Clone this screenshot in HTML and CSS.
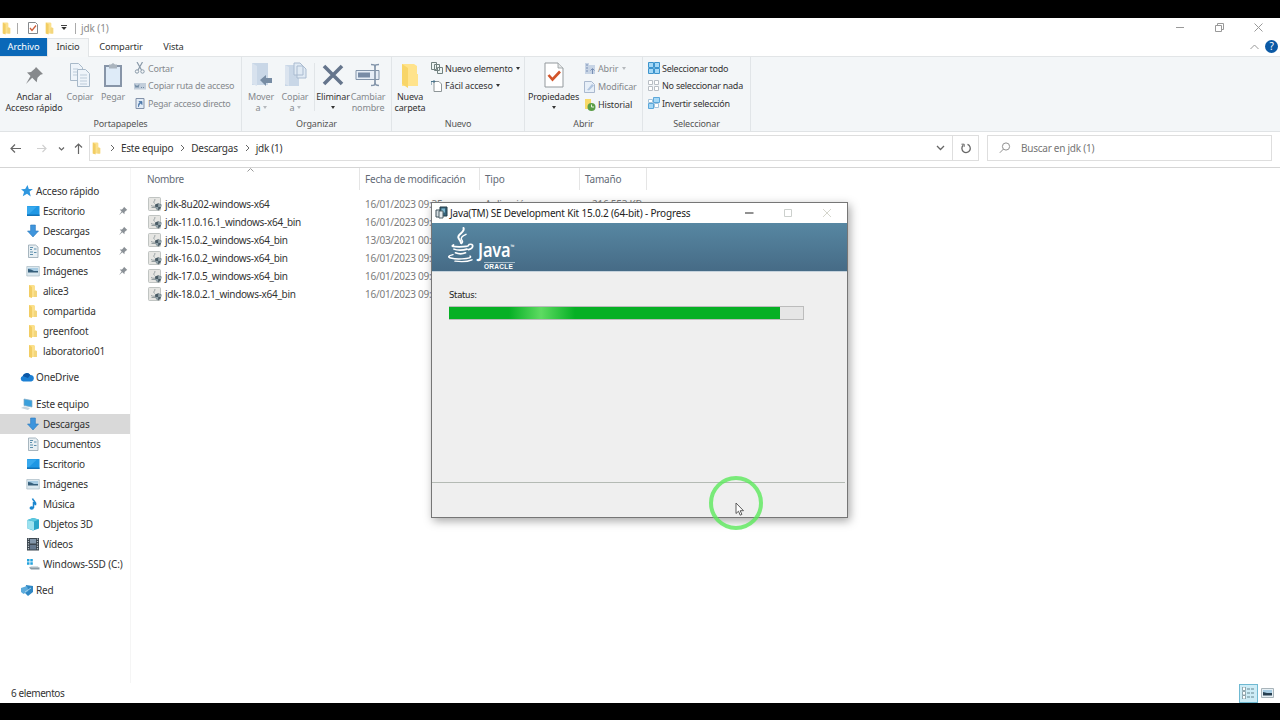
FILE: index.html
```html
<!DOCTYPE html>
<html lang="es">
<head>
<meta charset="utf-8">
<title>jdk (1)</title>
<link rel="stylesheet" href="styles.css">
</head>
<body>
<svg class="defs" width="0" height="0">
  <symbol id="folder" viewBox="0 0 14 14"><path d="M3 1h5l1 1v4l2 1v6H3z" fill="#fbe08c"/><path d="M3 1l3 2v11l-3-1z" fill="#f2cd63"/><path d="M8 7h3v6H8z" fill="#f3d67d"/></symbol>
  <symbol id="pin" viewBox="0 0 10 10"><path d="M6 .7L9.3 4 8.2 4.4 6.6 6 6.4 8.2 4.3 6.2 1 9.2 3.6 5.5 1.7 3.6 4 3.4 5.6 1.8z" fill="#8a9096"/></symbol>
  <symbol id="down" viewBox="0 0 14 14"><path d="M4.6 1h4.8v6H12.500L7 13 1.500 7h3.100z" fill="#3f95dc" stroke="#2a79be" stroke-width=".6"/></symbol>
  <symbol id="desk" viewBox="0 0 14 14"><rect x="1" y="2" width="12.500" height="10" rx=".5" fill="#1f97e4"/><path d="M1 10.500h12.500V12H1z" fill="#1272b8"/><path d="M1 2.500h10L3 10H1z" fill="#37a9ee"/></symbol>
  <symbol id="doc" viewBox="0 0 14 14"><path d="M2.500 1h7l2.500 2v10.500H2.500z" fill="#e8eff3" stroke="#93a5b0" stroke-width=".8"/><path d="M4 3.500h3M4 5.500h2M8 5h2.500M4 8h3M4 10.500h3M8 8.500h2.500" stroke="#5f90ad"/></symbol>
  <symbol id="pic" viewBox="0 0 14 14"><path d="M.8 2.500h12.500v9.500H.8z" fill="#dbe8ef" stroke="#a9bac4" stroke-width=".7"/><path d="M2 4h10v3H2z" fill="#a8cce3"/><path d="M2 5l3 .5 3 1.500h4v1.500H2z" fill="#365f7b"/></symbol>
  <symbol id="star" viewBox="0 0 14 14"><path d="M7.500 1l1.300 4H13L9.600 7.500l1.100 5L7 9.700 2.800 12.200l1.300-4.400L1 5.300l4.200-.2z" fill="#2f97df"/></symbol>
  <symbol id="cloud" viewBox="0 0 14 14"><path d="M3.200 11.500a2.900 2.900 0 0 1-.5-5.600A4.300 4.300 0 0 1 10.300 5 3.300 3.300 0 0 1 11.300 11.500z" fill="#1c80d4"/><path d="M2.700 5.900A4.300 4.300 0 0 1 10.300 5L8 8z" fill="#0c57a6"/></symbol>
  <symbol id="pc" viewBox="0 0 14 14"><path d="M4 2l8 1.500V10L4 8.500z" fill="#3aa0dc" stroke="#7fabc6" stroke-width=".7"/><path d="M1 11l3-1.500 6 1.500-2 2z" fill="#c6d4dd"/></symbol>
  <symbol id="music" viewBox="0 0 14 14"><path d="M6.500 1.500c.5 2.500 4 3 3 6.500-.3-1.500-1-2-2-2.300V11" fill="none" stroke="#1a86cf" stroke-width="1.500"/><ellipse cx="5.700" cy="11" rx="2.200" ry="1.700" fill="#1a86cf"/></symbol>
  <symbol id="cube" viewBox="0 0 14 14"><path d="M1.500 3L7 1l6 1.500v9L7 13.500l-5.500-2z" fill="#27a5c9"/><path d="M1.500 3L8 4.500v9l-6.500-2z" fill="#9be2ef"/><path d="M1.500 3L7 1l6 1.500-5 2z" fill="#5cc8df"/></symbol>
  <symbol id="film" viewBox="0 0 14 14"><path d="M1 1h12v12.500H1z" fill="#3c464f"/><path d="M4 2h6v4.500H4z" fill="#8498ac"/><path d="M4 8h6v4.500H4z" fill="#66798f"/><path d="M2.500 1.500v12M11.500 1.500v12" stroke="#b9c2c8" stroke-width="1.200" stroke-dasharray="1.200 1.200"/></symbol>
  <symbol id="drive" viewBox="0 0 14 14"><path d="M1 2h2.500v2.500H1zM4.300 2h2.500v2.500H4.300zM1 5.300h2.500v2.500H1zM4.300 5.300h2.500v2.500H4.300z" fill="#24a3dd"/><path d="M3 10.500l3-1h5l2.500 1v2H5z" fill="#8b9aa3"/><path d="M3 10l3-1h5l2.500 1.500H6z" fill="#d4dde1"/></symbol>
  <symbol id="net" viewBox="0 0 14 14"><path d="M6 2l7 1v6l-5 4-3-3z" fill="#2f87c4"/><path d="M1 5l6-2 1.500 5-5 3L1 9z" fill="#5cabdc"/><path d="M5 9l6-4" stroke="#b8dcf0" stroke-width=".8"/></symbol>
  <symbol id="jar" viewBox="0 0 14 14"><rect x=".5" y=".5" width="12" height="13" rx="1" fill="#e6e6e3" stroke="#b3b7b6" stroke-width=".8"/><path d="M6.500 2c1.500 1.500-2 2.500 0 4.500M3 8.500c2 1 4 1 5.500 0M3.500 10.500h4" fill="none" stroke="#8b9598" stroke-width=".9"/><path d="M7 7.500l3.200-1.200L13.400 7.500c0 3-1 4.800-3.200 6-2.200-1.200-3.200-3-3.200-6z" fill="#4a5c66"/><path d="M10.200 6.500v3.500H13c.3-1 .4-1.700.3-2.300zM10.200 10v3.300C8.800 12.500 8 11.500 7.400 10z" fill="#93a3aa"/></symbol>
  <symbol id="check" viewBox="0 0 20 26"><path d="M1 1h13l5 5v19H1z" fill="#fff" stroke="#93999d"/><path d="M14 1v5h5" fill="#e5e7e8" stroke="#93999d" stroke-width=".8"/><path d="M4.500 13l4 4.500L16 9.500" fill="none" stroke="#d2542a" stroke-width="2.600"/></symbol>
</svg>

<div class="screen">
  <header class="titlebar">
    <svg class="tb-folder" width="13" height="14"><use href="#folder"/></svg>
    <i class="tick"></i>
    <svg class="tb-check" width="10" height="12" viewBox="0 0 10 12"><path d="M.5.5h7l2 2v9h-9z" fill="#fff" stroke="#85898c"/><path d="M2 6l2 2.500 4-5" fill="none" stroke="#cd5d38" stroke-width="1.300"/></svg>
    <svg class="tb-folder2" width="13" height="14"><use href="#folder"/></svg>
    <svg class="tb-drop" width="6" height="6" viewBox="0 0 6 6"><path d="M0 .5h6" stroke="#444"/><path d="M.3 2h5.400L3 5z" fill="#333"/></svg>
    <i class="tick"></i>
    <span class="tb-title">jdk (1)</span>
    <svg class="winbtns" width="92" height="12" viewBox="0 0 92 12" fill="none" stroke="#999"><path d="M2 5.500h8"/><path d="M41.500 3.500h6v6h-6zM43.500 3.500v-2h6v6h-2"/><path d="M80.500 1.500l8 8M88.500 1.500l-8 8"/></svg>
  </header>
  <nav class="tabs">
    <span class="tab file">Archivo</span><span class="tab active">Inicio</span><span class="tab t3">Compartir</span><span class="tab t4">Vista</span>
    <svg class="collapse" width="9" height="6" viewBox="0 0 9 6"><path d="M.5 5l4-4 4 4" fill="none" stroke="#999"/></svg>
    <span class="help">?</span>
  </nav>

  <section class="ribbon">
    <div class="group g1">
      <div class="tools">
        <div class="big w62"><svg width="20" height="26" viewBox="0 0 20 26"><path d="M12 5l7 7-2.500.7-3 3-.8 4.600-4.500-4.500L2 22l4.500-8L3 10.500l4-.5 4-3.500z" fill="#86898c"/></svg><span>Anclar al<br>Acceso rápido</span></div>
        <div class="big w30 dim"><svg width="22" height="26" viewBox="0 0 22 26"><g fill="#eef4fa" stroke="#a8b9c9"><path d="M1.500 1.500h8l4 4v13h-12z"/><path d="M8.500 7.500h8l4 4v13h-12z"/></g><path d="M4 7h5M4 10h4M4 13h4M11 13h7M11 16h7M11 19h7M11 22h7" stroke="#bccbd9"/></svg><span>Copiar</span></div>
        <div class="big w36 dim"><svg width="20" height="26" viewBox="0 0 20 26"><path d="M2 4h16v20H2z" fill="#deebf8" stroke="#8795a8" stroke-width="2"/><path d="M6 2.500h2L10 1l2 1.500h2v4H6z" fill="#aab4be"/></svg><span>Pegar</span></div>
        <div class="small dim s1">
          <div><svg width="12" height="12" viewBox="0 0 12 12" fill="none" stroke="#8999a8"><path d="M3 0l4.500 8M8.500 0L4 8" stroke-width="1.200"/><circle cx="3" cy="9.500" r="1.700"/><circle cx="8.500" cy="9.500" r="1.700"/></svg><span>Cortar</span></div>
          <div><svg width="12" height="12" viewBox="0 0 12 12"><path d="M0 3h12v6.500H0z" fill="#c2cedb"/><path d="M1 4.500l1 3 1-2 1 2 1-3M7 7.500h1M9 7.500h1" fill="none" stroke="#69839e" stroke-width=".9"/></svg><span>Copiar ruta de acceso</span></div>
          <div><svg width="12" height="12" viewBox="0 0 12 12"><path d="M2 1.500h8v10H2z" fill="#e1ebf6" stroke="#8291a8"/><path d="M4.500 10V8c0-2 1-2 2-2M5 4.500h3v3z" stroke="#4e79aa" fill="#4e79aa" stroke-width=".8"/></svg><span>Pegar acceso directo</span></div>
        </div>
      </div>
      <div class="caption">Portapapeles</div>
    </div>
    <div class="group g2">
      <div class="tools">
        <div class="big w34 dim"><svg width="24" height="26" viewBox="0 0 24 26"><path d="M3 1h16v22H3z" fill="#c9d7e7"/><path d="M3 1l5 3v20l-5-2z" fill="#d8e2ee"/><path d="M11 18l6-5v3h6v5h-6v3z" fill="#778ca4"/></svg><span>Mover<br>a <b class="dd"></b></span></div>
        <div class="big w34 dim"><svg width="24" height="26" viewBox="0 0 24 26"><path d="M2 3h14v21H2z" fill="#c9d7e7"/><path d="M2 3l4 2v19l-4-2z" fill="#dbe4ef"/><path d="M11 1h6l3 3v9h-9zM14 4h6l3 3v9h-9z" fill="#e0eaf4" stroke="#aabbd0"/></svg><span>Copiar<br>a <b class="dd"></b></span></div>
        <i class="vsep"></i>
        <div class="big w36"><svg width="22" height="26" viewBox="0 0 22 26"><path d="M2 4l18 18M20 4L2 22" stroke="#65758c" stroke-width="3.600"/></svg><span>Eliminar<br><b class="dd"></b></span></div>
        <div class="big w34 dim"><svg width="26" height="26" viewBox="0 0 26 26" fill="none" stroke="#8395aa"><path d="M1 8.500h23v9H1z" fill="#e6eef7"/><path d="M3 10.500h12v5H3z" fill="#788ca6" stroke="none"/><path d="M16 2.500c3 0 4 0 4 3v15c0 3-1 3-4 3M24 2.500c-3 0-4 0-4 3M20 20c0 3 1 3.500 4 3.500" stroke-width="1.700"/></svg><span>Cambiar<br>nombre</span></div>
      </div>
      <div class="caption">Organizar</div>
    </div>
    <div class="group g3">
      <div class="tools">
        <div class="big w36"><svg width="20" height="26" viewBox="0 0 20 26"><path d="M2 2h12l3 2v8h1v12H2z" fill="#ffe38c"/><path d="M2 2l6 4v20l-6-4z" fill="#f8d568"/></svg><span>Nueva<br>carpeta</span></div>
        <div class="small s3">
          <div><svg width="12" height="12" viewBox="0 0 12 12" fill="#edf4f3" stroke="#71807f"><path d="M.5.500h5v7h-5zM3.500 2.500h5v6h-5zM6.500 5.500h5v6h-5z"/></svg><span>Nuevo elemento</span><b class="dd"></b></div>
          <div><svg width="12" height="12" viewBox="0 0 12 12"><path d="M3 1.500h5l2.500 2.500v7.500H3z" fill="#fff" stroke="#8e9698"/><path d="M0 5V1.500h4M2.500 0L4 1.500 2.500 3" fill="none" stroke="#4d768d"/></svg><span>Fácil acceso</span><b class="dd"></b></div>
        </div>
      </div>
      <div class="caption">Nuevo</div>
    </div>
    <div class="group g4">
      <div class="tools">
        <div class="big w54"><svg width="20" height="26"><use href="#check"/></svg><span>Propiedades<br><b class="dd"></b></span></div>
        <div class="small s4">
          <div class="dim"><svg width="12" height="12" viewBox="0 0 12 12"><path d="M1 0h4v11H1zM5 2h6v9H5z" fill="#c7d4e5"/><path d="M2 2h2M2 5h2M2 8h2M8.500 11V6M6.500 7.500l2-2 2 2" fill="none" stroke="#788fb5"/></svg><span>Abrir</span><b class="dd"></b></div>
          <div class="dim"><svg width="12" height="12" viewBox="0 0 12 12"><path d="M.5.500h7l3 3v8H.500z" fill="#e7eff8" stroke="#aab9ce"/><path d="M3 9l5-6 2 1.500-5 5z" fill="#b1c5df"/></svg><span>Modificar</span></div>
          <div><svg width="12" height="12" viewBox="0 0 12 12"><path d="M1 0h6v11l-3-1H1z" fill="#f8d967"/><circle cx="7.500" cy="8" r="4" fill="#5b9e48"/><path d="M7.500 5.500V8H10" fill="none" stroke="#e8f4da"/></svg><span>Historial</span></div>
        </div>
      </div>
      <div class="caption">Abrir</div>
    </div>
    <div class="group g5">
      <div class="tools">
        <div class="small s5">
          <div><svg width="12" height="12" viewBox="0 0 12 12" fill="#a5d8f6" stroke="#3c94cd"><path d="M.5.500h5v5h-5zM6.500.500h5v5h-5zM.5 6.500h5v5h-5zM6.500 6.500h5v5h-5z"/></svg><span>Seleccionar todo</span></div>
          <div><svg width="12" height="12" viewBox="0 0 12 12" fill="#fff" stroke="#b8bec4"><path d="M.5.500h4v4h-4zM6.500.500h4v4h-4zM.5 6.500h4v4h-4zM6.500 6.500h4v4h-4z"/></svg><span>No seleccionar nada</span></div>
          <div><svg width="12" height="12" viewBox="0 0 12 12"><path d="M.5 2.500h4v3h-4zM6.500 6.500h4v4h-4z" fill="#fff" stroke="#a4c3da"/><path d="M5.500.500h6v5h-6zM.5 6.500h5v5h-5z" fill="#a5d8f6" stroke="#5ca7d9"/></svg><span>Invertir selección</span></div>
        </div>
      </div>
      <div class="caption">Seleccionar</div>
    </div>
  </section>

  <section class="address">
    <svg class="navs" width="89" height="14" viewBox="0 0 89 14" fill="none" stroke="#666" stroke-width="1.200"><path d="M11 7.500h10M15 3.500l-4 4 4 4"/><path d="M37 7.500h9M42.500 4l3.500 3.500-3.500 3.500" stroke="#d0d0d0"/><path d="M59 6.500l2.500 2.500 2.500-2.500"/><path d="M78.500 13V3M75 6.500L78.500 3 82 6.500"/></svg>
    <div class="path">
      <svg width="13" height="14"><use href="#folder"/></svg>
      <svg class="chev" width="5" height="8" viewBox="0 0 5 8"><path d="M1 1l3 3-3 3" fill="none" stroke="#666"/></svg><span class="c1">Este equipo</span>
      <svg class="chev" width="5" height="8" viewBox="0 0 5 8"><path d="M1 1l3 3-3 3" fill="none" stroke="#666"/></svg><span class="c2">Descargas</span>
      <svg class="chev" width="5" height="8" viewBox="0 0 5 8"><path d="M1 1l3 3-3 3" fill="none" stroke="#666"/></svg><span class="c3">jdk (1)</span>
      <svg class="pdrop" width="9" height="6" viewBox="0 0 9 6"><path d="M1 1l3.500 3.500L8 1" fill="none" stroke="#666" stroke-width="1.300"/></svg>
    </div>
    <div class="refresh"><svg width="12" height="12" viewBox="0 0 12 12" fill="none" stroke="#666" stroke-width="1.300"><path d="M7.500 2.400A4.200 4.200 0 1 1 3.200 3.300"/><path d="M1.500 2.200h2.700v2.600" stroke-width="1"/></svg></div>
    <div class="search"><svg width="12" height="12" viewBox="0 0 12 12" fill="none" stroke="#909090"><circle cx="7" cy="4.500" r="3.600"/><path d="M4.500 7L.8 10.800"/></svg><span>Buscar en jdk (1)</span></div>
  </section>

  <main class="content">
    <aside class="side">
      <div class="row top"><svg><use href="#star"/></svg><span>Acceso rápido</span></div>
      <div class="row"><svg><use href="#desk"/></svg><span>Escritorio</span><svg class="pin"><use href="#pin"/></svg></div>
      <div class="row"><svg><use href="#down"/></svg><span>Descargas</span><svg class="pin"><use href="#pin"/></svg></div>
      <div class="row"><svg><use href="#doc"/></svg><span>Documentos</span><svg class="pin"><use href="#pin"/></svg></div>
      <div class="row"><svg><use href="#pic"/></svg><span>Imágenes</span><svg class="pin"><use href="#pin"/></svg></div>
      <div class="row"><svg><use href="#folder"/></svg><span>alice3</span></div>
      <div class="row wide"><svg><use href="#folder"/></svg><span>compartida</span></div>
      <div class="row wide"><svg><use href="#folder"/></svg><span>greenfoot</span></div>
      <div class="row wide"><svg><use href="#folder"/></svg><span>laboratorio01</span></div>
      <div class="row top gap"><svg><use href="#cloud"/></svg><span>OneDrive</span></div>
      <div class="row top gap"><svg><use href="#pc"/></svg><span>Este equipo</span></div>
      <div class="row sel"><svg><use href="#down"/></svg><span>Descargas</span></div>
      <div class="row"><svg><use href="#doc"/></svg><span>Documentos</span></div>
      <div class="row"><svg><use href="#desk"/></svg><span>Escritorio</span></div>
      <div class="row"><svg><use href="#pic"/></svg><span>Imágenes</span></div>
      <div class="row"><svg><use href="#music"/></svg><span>Música</span></div>
      <div class="row"><svg><use href="#cube"/></svg><span>Objetos 3D</span></div>
      <div class="row"><svg><use href="#film"/></svg><span>Vídeos</span></div>
      <div class="row wide"><svg><use href="#drive"/></svg><span>Windows-SSD (C:)</span></div>
      <div class="row top gap"><svg><use href="#net"/></svg><span>Red</span></div>
    </aside>
    <section class="files">
      <div class="head"><span class="h1">Nombre<svg class="sort" width="7" height="4" viewBox="0 0 7 4"><path d="M.5 3.500l3-3 3 3" fill="none" stroke="#999"/></svg></span><span class="h2">Fecha de modificación</span><span class="h3">Tipo</span><span class="h4">Tamaño</span></div>
      <div class="file-row"><svg><use href="#jar"/></svg><span class="name">jdk-8u202-windows-x64</span><span class="date">16/01/2023 09:35</span><span class="type">Aplicación</span><span class="size">216.553 KB</span></div>
      <div class="file-row"><svg><use href="#jar"/></svg><span class="name">jdk-11.0.16.1_windows-x64_bin</span><span class="date">16/01/2023 09:</span></div>
      <div class="file-row"><svg><use href="#jar"/></svg><span class="name">jdk-15.0.2_windows-x64_bin</span><span class="date">13/03/2021 00:</span></div>
      <div class="file-row"><svg><use href="#jar"/></svg><span class="name">jdk-16.0.2_windows-x64_bin</span><span class="date">16/01/2023 09:</span></div>
      <div class="file-row"><svg><use href="#jar"/></svg><span class="name">jdk-17.0.5_windows-x64_bin</span><span class="date">16/01/2023 09:</span></div>
      <div class="file-row"><svg><use href="#jar"/></svg><span class="name">jdk-18.0.2.1_windows-x64_bin</span><span class="date">16/01/2023 09:</span></div>
    </section>
  </main>

  <footer class="status"><span>6 elementos</span>
    <div class="views"><i class="v1"><svg width="13" height="12" viewBox="0 0 13 12"><path d="M.5 0h3v3.500h-3zM.5 4.500h3V8h-3zM.5 8.500h3V12h-3z" fill="#fff" stroke="#7d949c" stroke-width=".8"/><path d="M5 2h3M9 2h3M5 6h3M9 6h3M5 10h3M9 10h3" stroke="#64858f"/></svg></i><svg width="13" height="11" viewBox="0 0 13 11"><path d="M.5.500h12v9H.500z" fill="#e6eff4" stroke="#a8b4ba"/><path d="M2 2h9v3H2z" fill="#a5cbe2"/><path d="M2 4l4 1h5v2.500H2z" fill="#263f50"/></svg></div>
  </footer>
</div>

<div class="dialog">
  <div class="dlg-title">
    <svg width="13" height="13" viewBox="0 0 13 13"><path d="M1 4h4v7H1z" fill="#d5dde1" stroke="#41535d"/><path d="M5 1h7v9H5z" fill="#36647c" stroke="#253c49"/><path d="M6.500 2.500h3.500v4H6.500z" fill="#7cb6cf"/><path d="M4 5h4v7H4z" fill="#e7ecef" stroke="#51626b"/></svg>
    <span>Java(TM) SE Development Kit 15.0.2 (64-bit) - Progress</span>
    <svg class="dlg-btns" width="90" height="12" viewBox="0 0 90 12" fill="none"><path d="M2 6h8.500" stroke="#555" stroke-width="1.300"/><path d="M41.500 2.500h7v7h-7z" stroke="#ccd0cd"/><path d="M80 2l8 8M88 2l-8 8" stroke="#d5d6cd"/></svg>
  </div>
  <div class="banner">
    <svg width="27" height="37" viewBox="0 0 27 40" preserveAspectRatio="none" fill="none" stroke="#fff" stroke-linecap="round"><path d="M15.500 2c2 5-7 7-5 11 .7 2 2.500 3 2.500 5.500" stroke-width="2"/><path d="M18 9c-4 2-6 4-4 6.500 1 1.500.5 2.500-.5 3.500" stroke-width="1.500"/><path d="M5.500 20.500c-3 1.500 0 2 6 2s9-.7 9-1.500M21 20c5-1.500 5 4-.5 5.500M6 25c3 1.500 9 1.500 13 0M7.500 29c3 1.300 7 1.300 10 0" stroke-width="1.800"/><path d="M5 31c-11 3 2 5 9 4.500s10-1.500 8-3M7 38c7 1 14 0 17-1.500" stroke-width="1.500"/></svg>
    <div class="brand"><span class="java">Java<sup>™</sup></span><span class="oracle">ORACLE</span></div>
  </div>
  <div class="dlg-body">
    <span class="st">Status:</span>
    <div class="bar"><div class="fill"></div></div>
  </div>
  <div class="dlg-foot"></div>
</div>
<div class="ring"></div>
<svg class="cursor" width="10" height="14" viewBox="0 0 10 14"><path d="M1 1v10.500l2.500-2.300 1.700 4 1.700-.8-1.700-3.700H8.500z" fill="#fff" stroke="#4c4c4c" stroke-width=".9"/></svg>
</body>
</html>
```
FILE: styles.css
```css
* { box-sizing: border-box; }
body { margin: 0; width: 1280px; height: 720px; overflow: hidden; background: #000; font-family: "Noto Sans", sans-serif; font-size: 10px; color: #333; position: relative; letter-spacing: -.25px; }
.defs { position: absolute; }
span { white-space: nowrap; }
svg { flex: none; }
i, .dd { flex: none; }
.screen { margin-top: 18px; height: 685px; background: #fff; display: flex; flex-direction: column; }

.titlebar { height: 20px; display: flex; align-items: center; }
.tick { width: 1px; height: 11px; background: #aaa; }
.tb-folder { margin-right: 4px; }
.tb-check { margin: 0 5px 0 10px; }
.tb-folder2 { margin-right: 5px; }
.tb-drop { margin-right: 8px; }
.tb-title { margin-left: 5px; color: #8c8c8c; font-size: 10px; letter-spacing: -.1px; }
.winbtns { margin: 0 14px 0 auto; }

.tabs { height: 19px; display: flex; align-items: stretch; border-bottom: 1px solid #e2e5e7; line-height: 18px; font-size: 9.300px; letter-spacing: -.1px; }
.tab { text-align: center; height: 18px; }
.file { width: 47px; background: #0a68b8; color: #fff; }
.active { width: 42px; height: 19px; background: #f5f7f8; border: 1px solid #e2e5e7; border-bottom: 0; line-height: 16px; }
.t3 { width: 64px; }
.t4 { width: 41px; }
.collapse { margin: 6px 6px 0 auto; }
.help { width: 13px; height: 13px; margin: 2px 2px 0 0; border-radius: 50%; background: #0b59a5; color: #fff; font-size: 10px; line-height: 13px; text-align: center; }

.ribbon { height: 75px; background: #f3f6f8; border-bottom: 1px solid #e0e3e5; display: flex; font-size: 9px; }
.group { border-right: 1px solid #e1e5e8; display: flex; flex-direction: column; }
.g1 { width: 242px; } .g2 { width: 150px; } .g3 { width: 133px; } .g4 { width: 118px; } .g5 { width: 108px; }
.tools { display: flex; height: 60px; padding-top: 5px; }
.g1 .tools { padding-left: 3px; }
.g2 .tools { padding-left: 2px; }
.g4 .tools { padding-left: 1px; }
.caption { text-align: center; line-height: 14px; color: #555; letter-spacing: -.15px; }
.big { display: flex; flex-direction: column; align-items: center; text-align: center; line-height: 11px; letter-spacing: -.15px; }
.big span { margin-top: 3px; }
.w62 { width: 62px; } .w30 { width: 30px; } .w36 { width: 36px; } .w34 { width: 34px; } .w54 { width: 55px; }
.dim { color: #85898d; }
.vsep { width: 1px; height: 48px; background: #e1e5e8; margin: 1px 0 0 2px; }
.dd { display: inline-block; width: 0; height: 0; border: 2.500px solid transparent; border-top: 3px solid currentColor; border-bottom: 0; vertical-align: 2px; }
.dim .dd { border-top-color: #b5b9bd; }
.small { display: flex; flex-direction: column; margin-top: -2.500px; }
.small > div { height: 17.500px; display: flex; align-items: center; }
.small span { margin-left: 2px; }
.small .dd { margin-left: 4px; }
.s3 .dd { margin-left: 3px; }
.s3 { letter-spacing: -.15px; }
.s1 { margin-left: 3px; } .s3 { margin-left: 3px; } .s4 { margin-left: 3px; } .s5 { margin-left: 5px; }
.s4 > div { height: 18px; }
.s4 { letter-spacing: -.15px; }

.address { height: 36px; display: flex; align-items: center; border-bottom: 1px solid #d5d5d5; padding-bottom: 3px; font-size: 10px; }
.path { width: 864px; height: 26px; border: 1px solid #dedede; display: flex; align-items: center; }
.chev { margin: 0 6px 0 7px; }
.pdrop { margin: 0 7px 0 auto; }
.refresh { width: 26px; height: 26px; border: 1px solid #dedede; border-left: 0; display: flex; align-items: center; justify-content: center; }
.search { margin-left: 8px; width: 285px; height: 26px; border: 1px solid #dedede; display: flex; align-items: center; padding-left: 11px; color: #757575; }
.search span { margin-left: 10px; }

.content { flex: 1; display: flex; }
.side { width: 131px; padding-top: 13px; border-right: 1px solid #f5f5f5; }
.row { height: 20px; width: 130px; padding-left: 26px; display: flex; align-items: center; }
.row svg { width: 14px; height: 14px; margin-right: 3px; }
.row .pin { width: 10px; height: 10px; margin: 0 2px 0 auto; }
.top { padding-left: 20px; letter-spacing: -.18px; }
.wide { letter-spacing: -.13px; }
.top svg { margin-right: 2px; }
.gap { margin-top: 6.300px; }
.sel { background: #d9d9d9; }
.files { padding-left: 16px; }
.head { display: flex; height: 22px; line-height: 22px; color: #636b76; margin-bottom: 5px; letter-spacing: -.2px; }
.head span { border-right: 1px solid #e5e5e5; padding-left: 5px; }
.head .h1 { width: 213px; padding-left: 0; position: relative; letter-spacing: -.3px; }
.sort { position: absolute; left: 100px; top: 0; }
.h2 { width: 120px; } .h3 { width: 100px; } .h4 { width: 67px; }
.file-row { height: 18px; display: flex; align-items: center; }
.file-row svg { width: 14px; height: 14px; margin-left: 1px; margin-right: 3px; }
.name { width: 200px; letter-spacing: -.3px; }
.date { width: 120px; color: #7b7b7b; }
.type { width: 107px; color: #7b7b7b; }
.size { color: #7b7b7b; }

.status { height: 20px; display: flex; align-items: center; justify-content: space-between; padding-left: 11px; letter-spacing: -.4px; }
.views { display: flex; align-items: center; gap: 3px; padding-right: 6px; }
.v1 { width: 19px; height: 19px; background: #cdecf6; border: 1px solid #6fb9d2; display: flex; align-items: center; justify-content: center; }

.dialog { position: absolute; left: 431px; top: 202px; width: 417px; height: 316px; background: #efefef; border: 1px solid #767676; box-shadow: 2px 3px 9px rgba(0,0,0,.35); display: flex; flex-direction: column; }
.dlg-title { height: 20px; background: #fff; display: flex; align-items: center; padding: 0 0 1px 3px; font-size: 10px; color: #222; letter-spacing: -.18px; }
.dlg-title span { margin-left: 2px; }
.dlg-btns { margin: 0 14px 0 auto; }
.banner { height: 49px; background: linear-gradient(#5787a2, #466b86); border-bottom: 1px solid #c5d2dc; display: flex; padding: 3px 0 0 16px; }
.brand { display: flex; flex-direction: column; color: #fff; margin: 13px 0 0 3px; }
.java { font-size: 19px; line-height: 22px; font-weight: 600; height: 23px; letter-spacing: -.2px; transform: scaleX(.86); transform-origin: left; }
.java sup { font-size: 6px; line-height: 6px; vertical-align: 8px; font-weight: 400; }
.oracle { font: bold 6.500px/7px "Liberation Sans", sans-serif; width: 31px; margin-left: 6px; border-top: 1px solid #a3bac9; letter-spacing: .3px; }
.dlg-body { padding: 18px 0 0 17px; height: 210px; }
.st { display: block; font: 8.500px/11px "DejaVu Sans", sans-serif; letter-spacing: -.3px; color: #222; }
.bar { margin-top: 5px; width: 355px; height: 14px; border: 1px solid #bcbcbc; border-left: 0; background: #e6e6e6; }
.fill { width: 331px; height: 12px; background: linear-gradient(90deg, transparent 60px, #5edb62 92px, transparent 126px), #06b025; }
.dlg-foot { border-top: 1px solid #b4bab4; margin-right: 2px; flex: 1; }
.ring { position: absolute; left: 709px; top: 476px; width: 54px; height: 54px; border: 4px solid rgba(91,232,91,.8); border-radius: 50%; }
.cursor { position: absolute; left: 735px; top: 502px; }
```
